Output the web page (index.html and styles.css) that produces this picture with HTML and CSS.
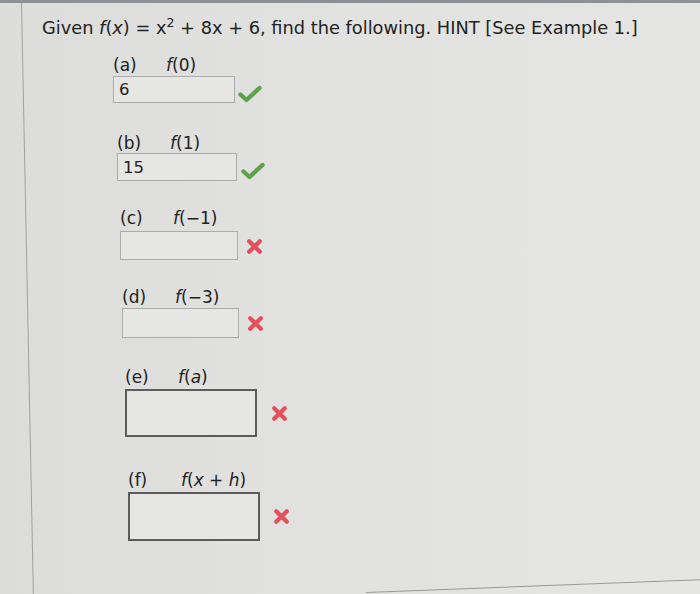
FILE: index.html
```html
<!DOCTYPE html>
<html>
<head>
<meta charset="utf-8">
<link rel="stylesheet" href="styles.css">
</head>
<body>
<div class="topband"></div>
<div class="panel">
  <div class="title">Given <i>f</i>(<i>x</i>) = x<sup>2</sup> + 8x + 6, find the following. HINT [See Example 1.]</div>
  <div class="items">
    <div class="item item-a">
      <div class="label"><span class="part">(a)</span><span class="fn"><i>f</i>(0)</span></div>
      <div class="row"><div class="box small">6</div><svg class="mark check" viewBox="0 0 24 18"><path d="M2.5 9.5 L8.5 15 L21.5 3" fill="none" stroke="#5ea24c" stroke-width="4.4" stroke-linecap="round" stroke-linejoin="round"/></svg></div>
    </div>
    <div class="item item-b">
      <div class="label"><span class="part">(b)</span><span class="fn"><i>f</i>(1)</span></div>
      <div class="row"><div class="box small">15</div><svg class="mark check" viewBox="0 0 24 18"><path d="M2.5 9.5 L8.5 15 L21.5 3" fill="none" stroke="#5ea24c" stroke-width="4.4" stroke-linecap="round" stroke-linejoin="round"/></svg></div>
    </div>
    <div class="item item-c">
      <div class="label"><span class="part">(c)</span><span class="fn"><i>f</i>(−1)</span></div>
      <div class="row"><div class="box small"></div><svg class="mark cross" viewBox="0 0 16 16"><path d="M3 3 L13 13 M13 3 L3 13" fill="none" stroke="#e2505c" stroke-width="4" stroke-linecap="round"/></svg></div>
    </div>
    <div class="item item-d">
      <div class="label"><span class="part">(d)</span><span class="fn"><i>f</i>(−3)</span></div>
      <div class="row"><div class="box small"></div><svg class="mark cross" viewBox="0 0 16 16"><path d="M3 3 L13 13 M13 3 L3 13" fill="none" stroke="#e2505c" stroke-width="4" stroke-linecap="round"/></svg></div>
    </div>
    <div class="item item-e">
      <div class="label"><span class="part">(e)</span><span class="fn"><i>f</i>(<i>a</i>)</span></div>
      <div class="row"><div class="box big"></div><svg class="mark cross" viewBox="0 0 16 16"><path d="M3 3 L13 13 M13 3 L3 13" fill="none" stroke="#e2505c" stroke-width="4" stroke-linecap="round"/></svg></div>
    </div>
    <div class="item item-f">
      <div class="label"><span class="part">(f)</span><span class="fn"><i>f</i>(<i>x</i> + <i>h</i>)</span></div>
      <div class="row"><div class="box big"></div><svg class="mark cross" viewBox="0 0 16 16"><path d="M3 3 L13 13 M13 3 L3 13" fill="none" stroke="#e2505c" stroke-width="4" stroke-linecap="round"/></svg></div>
    </div>
  </div>
</div>
<div class="bottomline"></div>
</body>
</html>
```

FILE: styles.css
```css
html, body {
  margin: 0;
  padding: 0;
}
body {
  width: 700px;
  height: 594px;
  overflow: hidden;
  background: linear-gradient(90deg, #dcdddb 0%, #e1e1df 40%, #e5e5e3 100%);
  font-family: "DejaVu Sans", Verdana, sans-serif;
  color: #222;
  position: relative;
}
.topband {
  height: 3px;
  background: #8d9196;
}
.panel {
  margin-left: 22px;
  height: 591px;
  position: relative;
}
.panel::before {
  content: "";
  position: absolute;
  left: -1px;
  top: 0;
  width: 1px;
  height: 591px;
  background: #a0a0a0;
  transform: skewX(1.15deg);
  transform-origin: left top;
}
.title {
  padding-left: 20px;
  padding-top: 13px;
  font-size: 17.8px;
  line-height: 24px;
  white-space: nowrap;
}
.title sup {
  font-size: 12.5px;
  line-height: 0;
  vertical-align: 7px;
}
.items {
  margin-left: 91px;
}
.item {
  display: flex;
  flex-direction: column;
}
.label {
  height: 20px;
  line-height: 20px;
  font-size: 17px;
  display: flex;
  white-space: nowrap;
}
.part {
  width: 53px;
}
.row {
  display: flex;
  align-items: center;
}
.box {
  box-sizing: border-box;
  background: #e6e6e4;
  font-size: 16.5px;
  padding-left: 5px;
  display: flex;
  align-items: center;
}
.small {
  border: 1px solid #ababab;
}
.big {
  border: 2px solid #5c5c5c;
}
.mark.check {
  width: 24px;
  height: 18px;
  margin-left: 3px;
  margin-top: 8px;
}
.mark.cross {
  width: 17px;
  height: 17px;
}
.item-a { margin-top: 15px; }
.item-a .row { margin-top: 1px; }
.item-a .box { width: 122px; height: 27px; }

.item-b { margin-top: 30px; margin-left: 4px; }
.item-b .box { width: 120px; height: 28px; }
.item-b .mark.check { margin-left: 4px; }

.item-c { margin-top: 27px; margin-left: 7px; }
.item-c .row { margin-top: 3px; }
.item-c .box { width: 118px; height: 29px; }
.item-c .mark.cross { margin-left: 8px; margin-top: 1px; }

.item-d { margin-top: 27px; margin-left: 9px; }
.item-d .row { margin-top: 1px; }
.item-d .box { width: 117px; height: 30px; }
.item-d .mark.cross { margin-left: 8px; margin-top: 0; }

.item-e { margin-top: 29px; margin-left: 12px; }
.item-e .row { margin-top: 2px; }
.item-e .box { width: 132px; height: 48px; }
.item-e .mark.cross { margin-left: 14px; margin-top: 0; }

.item-f { margin-top: 33px; margin-left: 15px; }
.item-f .row { margin-top: 2px; }
.item-f .box { width: 132px; height: 49px; }
.item-f .mark.cross { margin-left: 13px; margin-top: 0; }

.bottomline {
  position: absolute;
  left: 366px;
  top: 592px;
  width: 345px;
  height: 1px;
  background: #9a9a9a;
  transform: rotate(-2.2deg);
  transform-origin: left top;
}
```
